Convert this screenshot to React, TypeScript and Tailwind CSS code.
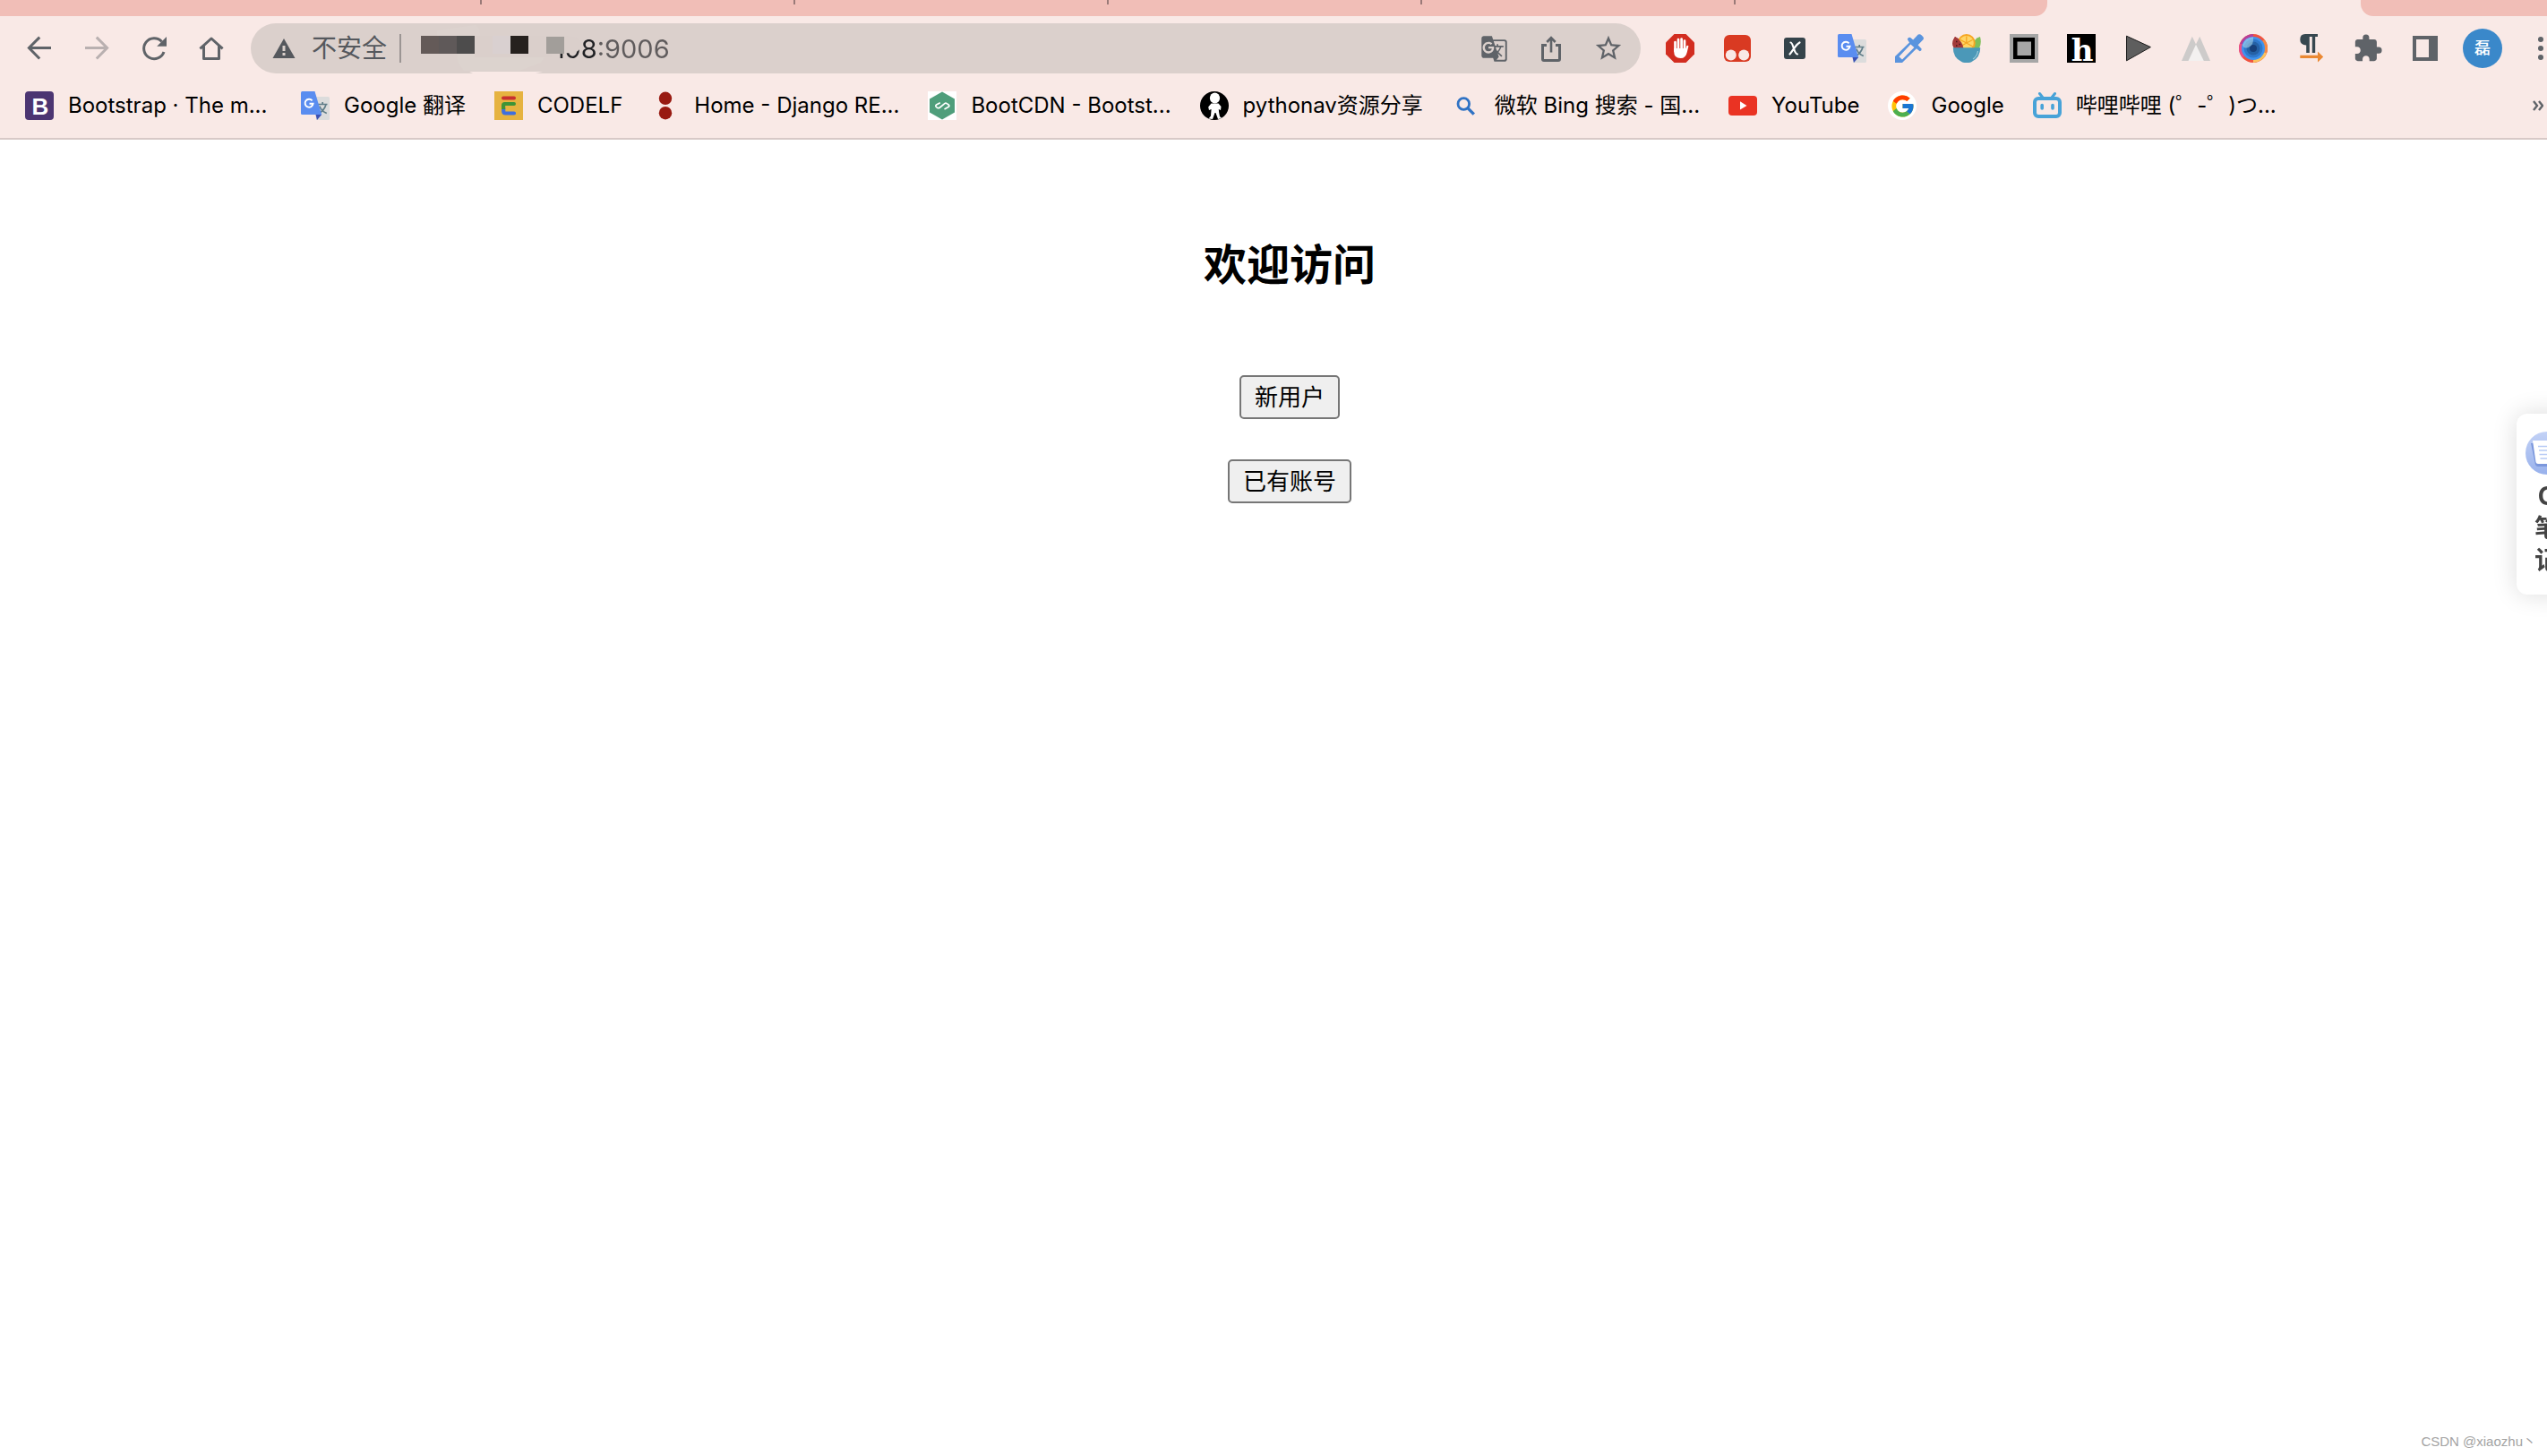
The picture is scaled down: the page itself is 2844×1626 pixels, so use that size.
import type { ReactNode } from 'react';
import { FcGoogle } from 'react-icons/fc';
import { MdExtension, MdGTranslate, MdStarBorder } from 'react-icons/md';

interface IconProps {
  children: ReactNode;
  className?: string;
}

// every toolbar / bookmark icon is drawn on a 32px grid
function Icon({ children, className }: IconProps) {
  return (
    <svg viewBox="0 0 32 32" width="32" height="32" fill="none" className={className} aria-hidden="true">
      {children}
    </svg>
  );
}

function BackIcon() {
  return (
    <Icon className="text-[#5f6368]">
      <path d="M29 15.5H5M16.2 3.6 4.4 15.5l11.8 12" stroke="currentColor" strokeWidth="3" />
    </Icon>
  );
}

function ForwardIcon() {
  return (
    <Icon className="text-[#b9b0b0]">
      <path d="M3 15.5h24M15.8 3.6l11.8 11.9-11.8 12" stroke="currentColor" strokeWidth="3" />
    </Icon>
  );
}

function ReloadIcon() {
  return (
    <Icon className="text-[#5f6368]">
      <path d="M24.6 8.4A11.5 11.5 0 1 0 27 20" stroke="currentColor" strokeWidth="3" />
      <path d="M30 3v10.8H19.2z" fill="currentColor" />
    </Icon>
  );
}

function HomeIcon() {
  return (
    <Icon className="text-[#5f6368]">
      <path d="M3.4 16.4 16 5l12.6 11.4M7.5 13.5v14h17v-14" stroke="currentColor" strokeWidth="3" strokeLinejoin="round" />
    </Icon>
  );
}

function WarningIcon() {
  return (
    <svg viewBox="0 0 26 22" width="26" height="22" aria-hidden="true">
      <path d="M13 0l12.5 22H.5z" fill="#55585d" />
      <path d="M11.5 8h3v6h-3zM11.5 16h3v3h-3z" fill="#dbd0cc" />
    </svg>
  );
}

function ShareIcon() {
  return (
    <Icon className="text-[#5f6368]">
      <path d="M11 12.5H6.5v15.5q0 1.5 1.5 1.5h16q1.5 0 1.5-1.5V12.5H21" stroke="currentColor" strokeWidth="3" />
      <path d="M16 20.5V5M11.3 9 16 4.2 20.7 9" stroke="currentColor" strokeWidth="2.6" />
    </Icon>
  );
}

function AdBlockIcon() {
  return (
    <Icon>
      <path d="M9.5 0h13L32 9.5v13L22.5 32h-13L0 22.5v-13z" fill="#d22d20" />
      <path d="M10.5 9v10M14 6v12M17.6 5.6V18M21 7.6V18" stroke="#fff" strokeWidth="2.7" strokeLinecap="round" />
      <path d="M9.2 16h13.2l1-3q1.6-.8 2 .6l-1.6 6.6q-1.4 6.8-7.2 6.8-7.4 0-7.4-7z" fill="#fff" />
    </Icon>
  );
}

function MonkeyIcon() {
  return (
    <Icon>
      <rect x="1" y="1" width="30" height="30" rx="6" fill="#d93a22" />
      <circle cx="8.8" cy="23.4" r="6" fill="#f9e9e6" />
      <circle cx="23.2" cy="23.4" r="6" fill="#f9e9e6" />
    </Icon>
  );
}

function XPathIcon() {
  return (
    <Icon>
      <rect x="4" y="4" width="24" height="24" rx="3" fill="#35434a" />
      <path d="M11.5 9.5c3 0 3.5 13 7.5 13M21.5 9.5C17 12 14.5 18 10.5 22.5" stroke="#fff" strokeWidth="2.2" strokeLinecap="round" />
    </Icon>
  );
}

function TranslateIcon() {
  return (
    <Icon>
      <path d="M16 6h14.5q1.5 0 1.5 1.5v23q0 1.5-1.5 1.5H17z" fill="#dcdcdc" />
      <path d="M19 14.5h10.5M24.2 12v2.5M28 14.5q-1.5 6-7.5 10M20.8 16.5q2 5.5 8 8" stroke="#607d88" strokeWidth="1.7" />
      <path d="M16.5 26h6.7L18 32z" fill="#3b51b5" />
      <path d="M1.5 0h14l7.7 26H1.5Q0 26 0 24.5v-23Q0 0 1.5 0z" fill="#5a8df0" />
      <path d="M12.6 10.3a4.5 4.5 0 1 0 1 3.4H9.5" stroke="#fff" strokeWidth="2" />
    </Icon>
  );
}

function DropperIcon() {
  return (
    <Icon>
      <path
        fillRule="evenodd"
        d="M0 32v-7L16 9.5 13.8 6q1-3 3.4-2l3 2.6 5.6-6q2-1.2 4 .8l1.6 1.8q1.2 1.8-.2 3.4l-5.6 5.6 4 4.2q.4 2.6-2 2.8L24 16.2 8 32zm4.4-6.8 3.6 3.4L21.4 15l-4-3.6z"
        fill="#5a94de"
      />
    </Icon>
  );
}

function SaladIcon() {
  return (
    <Icon>
      <path d="M3 3q-5 7-1 13h13Q12 7 3 3z" fill="#a23a3a" />
      <path d="M31 3q-8 2-9 13h8q3-6 1-13z" fill="#7fbf5a" />
      <circle cx="15.8" cy="10" r="10" fill="#f5a623" />
      <circle cx="15.8" cy="10" r="8" fill="#ffd565" />
      <path d="M15.8 10V2.5M15.8 10 9 6.5M15.8 10l6.8-3.5M15.8 10l-7 4M15.8 10l7 4" stroke="#f5a623" strokeWidth="1.3" />
      <path d="M3 3q-5 7-1 13h10.500Q11.500 8 3 3z" fill="#a23a3a" />
      <path d="M4 8.500h1.500M7.500 11.500H9M4 13h1.500" stroke="#4a1616" strokeWidth="1.4" />
      <path d="M.8 15.3h30.400q0 11-9.200 15.500-1 1.2-6 1.2t-6-1.2Q.8 26.500.8 15.300z" fill="#4b98b8" />
      <path d="M28.500 19q-1 6-5.500 9" stroke="#9ccbd9" strokeWidth="1.2" />
    </Icon>
  );
}

function FrameIcon() {
  return (
    <Icon>
      <path d="M0 0h32v32H0z" fill="#a6a6a6" />
      <path d="M4 4h24v24H4z" fill="#000" />
      <path d="M8.5 8.5h15.5v15.5H8.5z" fill="#a6a6a6" />
    </Icon>
  );
}

function HypothesisIcon() {
  return (
    <Icon>
      <path d="M0 0h32v32H0z" fill="#000" />
      <text x="17" y="30" textAnchor="middle" fontSize="34" fontWeight="700" fill="#fff" fontFamily="DejaVu Serif, serif">
        h
      </text>
    </Icon>
  );
}

function PlayIcon() {
  return (
    <Icon>
      <path d="M2.5 2.2 29.4 14.6 2.5 29.8z" fill="#5e5e5e" stroke="#1c1c1c" strokeWidth="1" />
    </Icon>
  );
}

function PeaksIcon() {
  return (
    <Icon>
      <path d="M0 30 11.8 2.7 16 11.5l4.2-8.800L32 30z" fill="#cdcbca" />
      <path d="M7.5 30 16 11.8 24.8 30z" fill="#f3f1f0" />
    </Icon>
  );
}

function LensIcon() {
  return (
    <Icon>
      <circle cx="16" cy="16" r="16" fill="#f0533f" />
      <path d="M16 16V0A16 16 0 0 0 1 11z" fill="#b5409b" />
      <path d="M16 16 1 10.5A16 16 0 0 0 4 26.5z" fill="#e8508a" />
      <path d="M16 16 28.5 6A16 16 0 0 1 31 21.5z" fill="#f58a45" />
      <path d="M16 16l15 5.5A16 16 0 0 1 16 32z" fill="#fbc35c" />
      <circle cx="16" cy="16" r="13" fill="#3f93ee" />
      <circle cx="16" cy="16" r="10.5" fill="#2f78ca" />
      <circle cx="16" cy="16" r="7.5" fill="#2561a5" />
      <circle cx="16" cy="16" r="4" fill="#17407a" />
      <path d="M4 12Q7 3.500 16 3.200q1 9-5.500 11.800Q5 17 4 12z" fill="#a8d4e8" fillOpacity=".6" />
    </Icon>
  );
}

function PilcrowIcon() {
  return (
    <Icon>
      <path d="M10 0h14v3h-2.800v18h-3.400V3h-3v18h-3.600v-8.500Q4.300 12 4.300 6.200 4.300 0 10 0z" fill="#37474f" />
      <path d="M4.300 23.800H24v-4.300l6.200 5.900-6.200 6v-4.400H4.300z" fill="#ea8832" />
    </Icon>
  );
}

function SidePanelIcon() {
  return (
    <Icon>
      <path fillRule="evenodd" d="M2 2h28v28H2zm4 4v20h14V6z" fill="#5f6368" />
    </Icon>
  );
}

function BootstrapIcon() {
  return (
    <Icon>
      <rect width="32" height="32" rx="4" fill="#4c3572" />
      <text x="17" y="26" textAnchor="middle" fontSize="26" fontWeight="700" fill="#fff" fontFamily="Liberation Sans, sans-serif">
        B
      </text>
    </Icon>
  );
}

function CodelfIcon() {
  return (
    <Icon>
      <path d="M0 0h32v32H0z" fill="#e6b340" />
      <path d="M10 7.5h12" stroke="#c8302f" strokeWidth="4" strokeLinecap="round" />
      <path d="M10.2 19v3q0 2.5 2.3 2.5H22" stroke="#3f6fdd" strokeWidth="4.2" strokeLinecap="round" />
      <path d="M8 20v-4.500Q8 12 11.500 12H22q2 0 2 2t-2 2h-9.800v4z" fill="#3d9437" />
    </Icon>
  );
}

function DjangoRestIcon() {
  return (
    <Icon>
      <circle cx="16" cy="7.8" r="7.2" fill="#981b12" />
      <circle cx="16" cy="24.2" r="7.2" fill="#981b12" />
    </Icon>
  );
}

function BootCdnIcon() {
  return (
    <Icon>
      <path d="M0 0h32v32H0z" fill="#fff" />
      <path d="M16 .5 30 8.500v15l-14 8-14-8v-15z" fill="#4f9e7b" />
      <path d="M13.8 12.8 9.600 15q-1.600 1.300 0 2.600l1.200.8q1.200.6 2.400-.2l5.600-4.600q1.200-.8 2.400 0l2 1.400q1.400 1.200 0 2.300L18.500 20" stroke="#fff" strokeWidth="1.7" />
    </Icon>
  );
}

function PythonavIcon() {
  return (
    <Icon>
      <circle cx="16" cy="16" r="16" fill="#000" />
      <ellipse cx="16.5" cy="7.5" rx="5.6" ry="6" fill="#fff" />
      <path
        d="M12.5 13.5h8l3 3.500-.5 4-2.200-1 .4 4 .8 4 2 2-4 1-2.500-7h-1L14 31l-4.500-.5 2.500-3 .6-7.500-2.600 1-.8-3.500z"
        fill="#fff"
      />
    </Icon>
  );
}

function BingSearchIcon() {
  return (
    <Icon>
      <circle cx="13.3" cy="14" r="6.3" stroke="#2f72c4" strokeWidth="2.8" />
      <path d="M17.8 18.6l7 7" stroke="#2f72c4" strokeWidth="3.4" />
    </Icon>
  );
}

function YouTubeIcon() {
  return (
    <Icon>
      <rect y="5" width="32" height="22" rx="4" fill="#ea3323" />
      <path d="M13 11.3 20.5 16 13 20.6z" fill="#fff" />
    </Icon>
  );
}

function GoogleIcon() {
  return (
    <span className="flex size-8 items-center justify-center rounded-full bg-white">
      <FcGoogle size={29} />
    </span>
  );
}

function BilibiliIcon() {
  return (
    <Icon>
      <rect x="2" y="8" width="28" height="20" rx="4" stroke="#48a3d8" strokeWidth="4" />
      <path d="M7.5 2.5 11 7M24.5 2.5 21 7" stroke="#48a3d8" strokeWidth="3" strokeLinecap="round" />
      <path d="M10.2 15.5v3.5M22 15.5v3.5" stroke="#48a3d8" strokeWidth="3.6" strokeLinecap="round" />
    </Icon>
  );
}

// blocks that hide the host part of the address
function AddressMask() {
  return (
    <svg width="184" height="56" className="pointer-events-none absolute top-0 left-0" aria-hidden="true">
      <path d="M20 8 62 2q6 0 6 12h-48z" fill="#dcd2ce" />
      <path d="M42 30h104l-10 14-24 9H50q-8-6-8-23z" fill="#dcd3ce" />
      <path d="M56 54h82l-8 2H60z" fill="#f9e9e6" />
      <path d="M62 14h102q15 0 17 8 1 8-8 11h-25v5H62z" fill="#dacfcb" />
      <path d="M2 14h20v20H2z" fill="#645a58" />
      <path d="M22 14h20v20H22z" fill="#5f5959" />
      <path d="M42 14h20v20H42z" fill="#4d4c4c" />
      <path d="M82 14h20v20H82z" fill="#d9d0d0" />
      <path d="M102 14h20v20h-20z" fill="#26211e" />
      <path d="M142 15h20v19h-20z" fill="#a29e9a" />
    </svg>
  );
}

const EXTENSIONS = [
  { label: 'AdBlock', icon: <AdBlockIcon /> },
  { label: 'Tampermonkey', icon: <MonkeyIcon /> },
  { label: 'XPath', icon: <XPathIcon /> },
  { label: 'Translate', icon: <TranslateIcon /> },
  { label: 'Color picker', icon: <DropperIcon /> },
  { label: 'Salad', icon: <SaladIcon /> },
  { label: 'Frame', icon: <FrameIcon /> },
  { label: 'Hypothesis', icon: <HypothesisIcon /> },
  { label: 'Play', icon: <PlayIcon /> },
  { label: 'Peaks', icon: <PeaksIcon /> },
  { label: 'Lens', icon: <LensIcon /> },
  { label: 'Pilcrow', icon: <PilcrowIcon /> },
  { label: 'Extensions', icon: <MdExtension size={34} color="#5f6368" /> },
  { label: 'Side panel', icon: <SidePanelIcon /> },
];

const BOOKMARKS = [
  { title: 'Bootstrap · The m...', icon: <BootstrapIcon />, width: 'min-w-[276px]' },
  { title: 'Google 翻译', icon: <TranslateIcon /> },
  { title: 'CODELF', icon: <CodelfIcon /> },
  { title: 'Home - Django RE...', icon: <DjangoRestIcon />, width: 'min-w-[276px]' },
  { title: 'BootCDN - Bootst...', icon: <BootCdnIcon /> },
  { title: 'pythonav资源分享', icon: <PythonavIcon /> },
  { title: '微软 Bing 搜索 - 国...', icon: <BingSearchIcon /> },
  { title: 'YouTube', icon: <YouTubeIcon /> },
  { title: 'Google', icon: <GoogleIcon /> },
  { title: '哔哩哔哩 (゜-゜)つ...', icon: <BilibiliIcon /> },
];

function ToolbarButton({ label, children }: { label: string; children: ReactNode }) {
  return (
    <button aria-label={label} className="flex h-14 w-16 shrink-0 items-center justify-center">
      {children}
    </button>
  );
}

function TabStrip() {
  return (
    <div className="flex h-[18px]">
      <div className="flex grow justify-end rounded-br-[14px] bg-[#f1beb7]">
        {[1, 2, 3, 4, 5].map((tab) => (
          <div key={tab} className="w-[350px]">
            <div className="h-[5px] w-[2px] bg-[#9a7a78]" />
          </div>
        ))}
      </div>
      <div className="w-[350px]" />
      <div className="w-52 rounded-bl-[14px] bg-[#f1beb7]" />
    </div>
  );
}

function Toolbar() {
  return (
    <div className="flex items-center overflow-hidden pt-2 pl-3">
      <ToolbarButton label="Back"><BackIcon /></ToolbarButton>
      <ToolbarButton label="Forward"><ForwardIcon /></ToolbarButton>
      <ToolbarButton label="Reload"><ReloadIcon /></ToolbarButton>
      <ToolbarButton label="Home"><HomeIcon /></ToolbarButton>

      <div className="mx-3 flex h-14 min-w-0 grow items-center rounded-full bg-[#dbd0cc] pr-1 pl-6">
        <WarningIcon />
        <span className="ml-[18px] text-[28px] leading-8 text-[#55585d]">不安全</span>
        <div className="ml-[14px] h-8 w-[2px] bg-[#9b9593]" />
        <div className="relative ml-5 h-14 grow">
          <input
            aria-label="Address"
            defaultValue="198:9006"
            className="h-14 w-full bg-[linear-gradient(90deg,#202124_201px,#5f5b5c_201px)] bg-clip-text pl-[151px] text-[29px] text-transparent outline-none"
          />
          <AddressMask />
        </div>
        <ToolbarButton label="Translate this page"><MdGTranslate size={31} color="#5f6368" /></ToolbarButton>
        <ToolbarButton label="Share"><ShareIcon /></ToolbarButton>
        <ToolbarButton label="Bookmark this page"><MdStarBorder size={34} color="#5f6368" /></ToolbarButton>
      </div>

      {EXTENSIONS.map((ext) => (
        <ToolbarButton key={ext.label} label={ext.label}>{ext.icon}</ToolbarButton>
      ))}
      <ToolbarButton label="Profile">
        <span className="flex size-11 items-center justify-center rounded-full bg-[#3a88ca] text-[18px] leading-none font-medium text-white">
          磊
        </span>
      </ToolbarButton>
      <button aria-label="Menu" className="flex w-10 shrink-0 flex-col items-end gap-1 pr-1">
        <span className="size-[6px] rounded-full bg-[#5f6368]" />
        <span className="size-[6px] rounded-full bg-[#5f6368]" />
        <span className="size-[6px] rounded-full bg-[#5f6368]" />
      </button>
    </div>
  );
}

function BookmarkBar() {
  return (
    <nav className="flex h-[74px] items-center gap-8 border-b-2 border-[#d8c9c7] pr-1 pl-7">
      {BOOKMARKS.map((bookmark) => (
        <a
          key={bookmark.title}
          href="#"
          className={`flex shrink-0 items-center gap-4 text-[24px] leading-8 text-black ${bookmark.width ?? ''}`}
        >
          {bookmark.icon}
          {bookmark.title}
        </a>
      ))}
      <button aria-label="More bookmarks" className="ml-auto">
        <svg width="12" height="12" viewBox="0 0 12 12" fill="none" aria-hidden="true">
          <path d="M1 1l4 5-4 5M7 1l4 5-4 5" stroke="#5f6368" strokeWidth="2.4" />
        </svg>
      </button>
    </nav>
  );
}

function NotesWidget() {
  return (
    <aside className="fixed top-[462px] -right-[34px] flex w-[68px] flex-col items-center rounded-xl bg-white py-5 shadow-[0_0_28px_rgba(0,0,0,0.14)]">
      <svg width="48" height="48" viewBox="0 0 48 48" aria-hidden="true">
        <defs>
          <linearGradient id="notes" x1="0" y1="0" x2="0" y2="1">
            <stop offset="0" stopColor="#c3d2f6" />
            <stop offset="1" stopColor="#98b1ec" />
          </linearGradient>
        </defs>
        <circle cx="24" cy="24" r="24" fill="url(#notes)" />
        <path d="M6 13l5 24q1 2 3 2h24V13z" fill="#7b97dc" />
        <path d="M8 10h30l4 26H14q-2 0-2.500-2z" fill="#fff" />
        <path d="M14 16.500h22M15 21h22M15.500 25.500h22M16.500 30h20" stroke="#b7caf5" strokeWidth="1.500" />
      </svg>
      <p className="mt-[6px] text-center text-[28px] leading-9 font-bold text-[#444]">
        C<br />笔<br />记
      </p>
    </aside>
  );
}

const pageButton =
  'h-[49px] rounded-[5px] border-2 border-[#767676] bg-[#efefef] px-[15px] text-[26px] leading-8 text-black';

export default function App() {
  return (
    <div className="flex min-h-screen flex-col bg-white font-[Inter,'Noto_Sans_CJK_SC',sans-serif]">
      <header className="bg-[#f9e9e6]">
        <TabStrip />
        <Toolbar />
        <BookmarkBar />
      </header>

      <main className="flex grow flex-col items-center pt-[104px] pl-9">
        <h1 className="text-5xl leading-[72px] font-bold text-black">欢迎访问</h1>
        <button className={`mt-[87px] ${pageButton}`}>新用户</button>
        <button className={`mt-[45px] ${pageButton}`}>已有账号</button>
      </main>

      <footer className="flex justify-end pr-3 pb-1 font-['Liberation_Sans','Noto_Sans_CJK_SC',sans-serif] text-[15px] leading-6 text-[#a3a3a3]">
        CSDN @xiaozhu丶
      </footer>
      <NotesWidget />
    </div>
  );
}
